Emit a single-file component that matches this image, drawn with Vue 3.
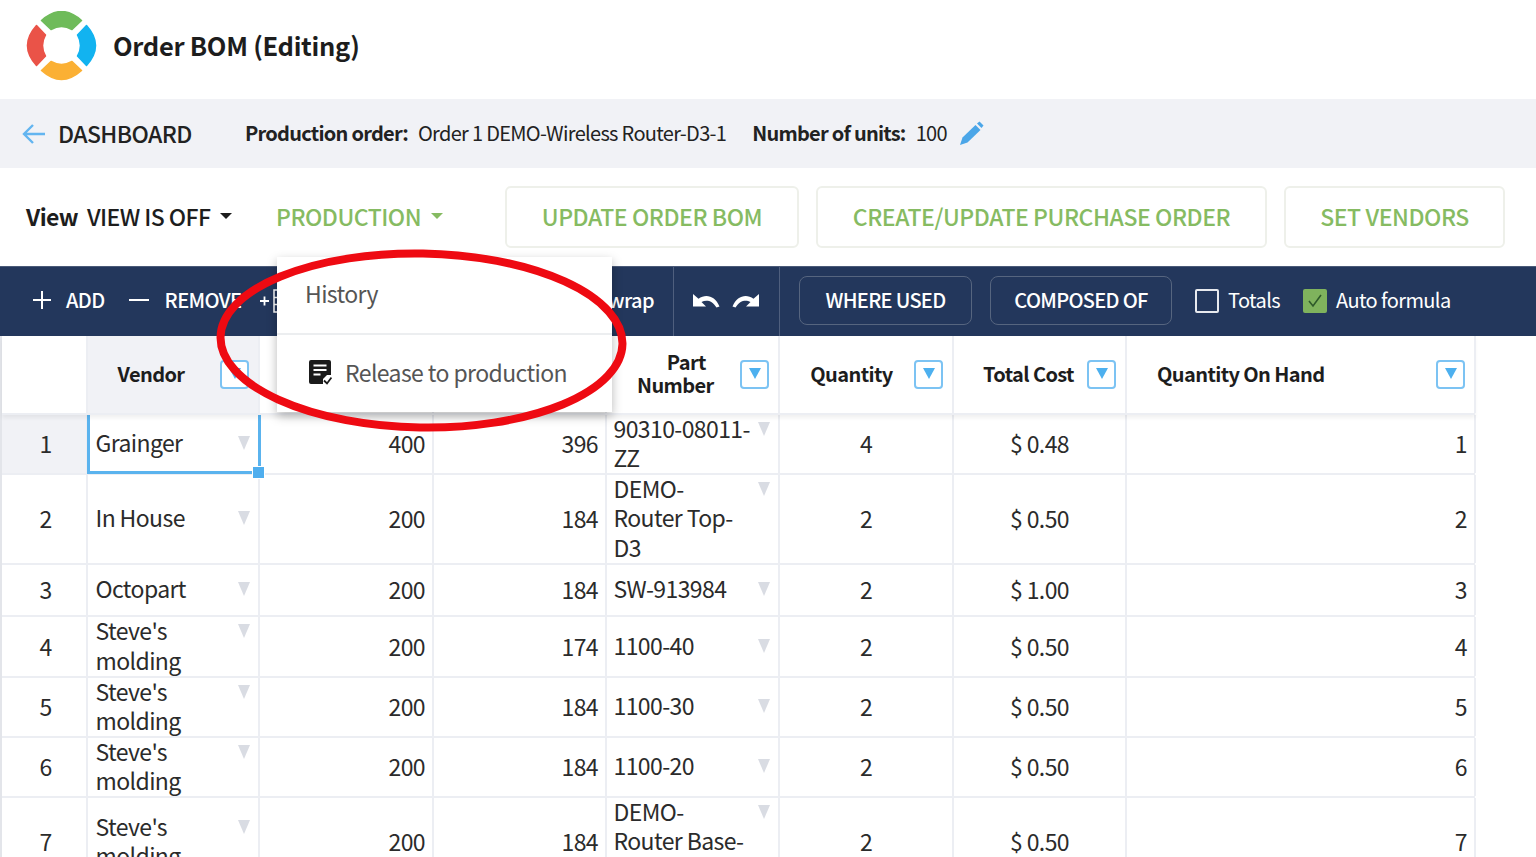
<script setup>
const cols = [
  { key: 'vendor', label: 'Vendor', shaded: true, filter: true },
  { key: 'a', label: '', filter: false },
  { key: 'b', label: '', filter: false },
  { key: 'part', label: 'Part\nNumber', filter: true },
  { key: 'qty', label: 'Quantity', filter: true },
  { key: 'cost', label: 'Total Cost', filter: true },
  { key: 'hand', label: 'Quantity On Hand', filter: true }
]
const rows = [
  { n: 1, h: 60, vendor: 'Grainger', a: 400, b: 396, part: '90310-08011-\nZZ', qty: 4, cost: '$ 0.48', hand: 1, active: true },
  { n: 2, h: 90, vendor: 'In House', a: 200, b: 184, part: 'DEMO-\nRouter Top-\nD3', qty: 2, cost: '$ 0.50', hand: 2 },
  { n: 3, h: 52, vendor: 'Octopart', a: 200, b: 184, part: 'SW-913984', qty: 2, cost: '$ 1.00', hand: 3 },
  { n: 4, h: 61, vendor: "Steve's\nmolding", a: 200, b: 174, part: '1100-40', qty: 2, cost: '$ 0.50', hand: 4 },
  { n: 5, h: 60, vendor: "Steve's\nmolding", a: 200, b: 184, part: '1100-30', qty: 2, cost: '$ 0.50', hand: 5 },
  { n: 6, h: 60, vendor: "Steve's\nmolding", a: 200, b: 184, part: '1100-20', qty: 2, cost: '$ 0.50', hand: 6 },
  { n: 7, h: 90, vendor: "Steve's\nmolding", a: 200, b: 184, part: 'DEMO-\nRouter Base-\nD3', qty: 2, cost: '$ 0.50', hand: 7 }
]
const logo = { 0: '#6fbb5a', 90: '#12b3f0', 180: '#fbb034', 270: '#ea5348' }
</script>

<template>
  <div class="page">
    <header class="head">
      <svg class="logo" viewBox="0 0 71 70" width="71" height="70">
        <g v-for="a in [0, 90, 180, 270]" :key="a" :transform="`rotate(${a} 35.5 34.5)`">
          <path d="M15.500 9.500Q35.500 -8.500 55.500 9.500L46 18.500Q35.500 12.500 25 18.500Z" :fill="logo[a]" :stroke="logo[a]" stroke-width="1.500" stroke-linejoin="round"/>
        </g>
      </svg>
      <h1 class="title">Order BOM (Editing)</h1>
    </header>

    <div class="subbar">
      <svg class="back" viewBox="0 0 24 22" width="24" height="22"><path d="M23 11H2M11 2 2 11l9 9" fill="none" stroke="#63b5f0" stroke-width="2.4"/></svg>
      <span class="dash">DASHBOARD</span>
      <b class="lab po">Production order:</b><span class="val">Order 1 DEMO-Wireless Router-D3-1</span>
      <b class="lab units">Number of units:</b><span class="val">100</span>
      <svg class="pencil" viewBox="0 0 25 25" width="25" height="25"><path d="M1 24l2.500-7.500L16.500 4l5 5L8.500 21.500z" fill="#4ba6e8"/><path d="M18 2.500l2.500-2 4 4-2 2.500z" fill="#4ba6e8"/></svg>
    </div>

    <div class="actions">
      <span class="view"><b>View</b><b class="viewoff">VIEW IS OFF</b><i class="caret dark"></i></span>
      <span class="prod">PRODUCTION<i class="caret green"></i></span>
      <button class="act a1">UPDATE ORDER BOM</button>
      <button class="act a2">CREATE/UPDATE PURCHASE ORDER</button>
      <button class="act a3">SET VENDORS</button>
    </div>

    <div class="toolbar">
      <div class="tleft">
        <span class="tool t-add"><svg viewBox="0 0 18 18" width="18" height="18"><path d="M9 0v18M0 9h18" stroke="#fff" stroke-width="2"/></svg>ADD</span>
        <span class="tool t-rem"><svg viewBox="0 0 20 18" width="20" height="18"><path d="M0 9h20" stroke="#fff" stroke-width="2"/></svg>REMOVE</span>
        <svg class="t-col" viewBox="0 0 30 24" width="30" height="24"><path d="M0 12h9M4.500 7.500v9" stroke="#fff" stroke-width="1.800"/><path d="M14 1h14v22H14zM14 8.500h14M14 15.500h14M21 1v22" fill="none" stroke="#fff" stroke-width="1.500"/></svg>
        <span class="t-wrap">Text wrap</span>
      </div>
      <span class="sep"></span>
      <svg class="undo" viewBox="0 0 28 14" width="28" height="14"><path d="M1 0v12.500h13l-4.500-4.500C14 5.500 20 6 24.500 13.500L27.500 12.500C23 2 14-.5 6.500 4.800z" fill="#fff"/></svg>
      <svg class="redo" viewBox="0 0 28 14" width="28" height="14"><path d="M27 0v12.500H14l4.500-4.500C14 5.500 8 6 3.500 13.500L.5 12.500C5 2 14-.5 21.500 4.800z" fill="#fff"/></svg>
      <span class="sep s2"></span>
      <button class="tbtn b1">WHERE USED</button>
      <button class="tbtn b2">COMPOSED OF</button>
      <span class="check"></span><span class="cl">Totals</span>
      <span class="check on"><svg viewBox="0 0 24 24" width="24" height="24"><path d="M6 12l4 5 8-11" fill="none" stroke="#2e5a2a" stroke-width="1.6"/></svg></span><span class="cl">Auto formula</span>
    </div>

    <div class="grid">
      <div class="row hrow">
        <div class="cell idx hd"></div>
        <div v-for="c in cols" :key="c.key" class="cell hd" :class="['c-' + c.key, { shaded: c.shaded }]">
          <span class="hl">{{ c.label }}</span>
          <span v-if="c.filter" class="fbtn"><i></i></span>
        </div>
      </div>
      <div v-for="r in rows" :key="r.n" class="row" :style="{ height: r.h + 'px' }">
        <div class="cell idx body" :class="{ idxon: r.active }">{{ r.n }}</div>
        <div class="cell c-vendor body txt" :class="{ active: r.active }">
          <div class="wrapbox"><span class="wraptxt">{{ r.vendor }}</span><i class="dd"></i></div>
          <i v-if="r.active" class="handle"></i>
        </div>
        <div class="cell c-a body num">{{ r.a }}</div>
        <div class="cell c-b body num">{{ r.b }}</div>
        <div class="cell c-part body txt">
          <div class="wrapbox"><span class="wraptxt">{{ r.part }}</span><i class="dd"></i></div>
        </div>
        <div class="cell c-qty body mid">{{ r.qty }}</div>
        <div class="cell c-cost body mid">{{ r.cost }}</div>
        <div class="cell c-hand body num">{{ r.hand }}</div>
      </div>
    </div>

    <div class="menu">
      <div class="mi m1">History</div>
      <div class="mi m2">
        <svg viewBox="0 0 24 26" width="24" height="26"><path d="M3 1h18a2 2 0 0 1 2 2v13h-4l-4 4v5H3a2 2 0 0 1-2-2V3a2 2 0 0 1 2-2z" fill="#1b1b1b"/><path d="M5.500 6.500h13M5.500 11h13M5.500 15.500h7" stroke="#fff" stroke-width="2.200"/><path d="M16 21.500l3 3 4.500-6" fill="none" stroke="#1b1b1b" stroke-width="1.800"/></svg>
        Release to production
      </div>
    </div>

    <svg class="ring" viewBox="0 0 1536 857" width="1536" height="857">
      <ellipse cx="421.500" cy="340.500" rx="201" ry="87" transform="rotate(1 421.500 340.500)" fill="none" stroke="#ee0a12" stroke-width="8"/>
    </svg>
  </div>
</template>

<style>
html, body { margin: 0; background: #fff; }
</style>

<style scoped>
.page { position: relative; width: 1536px; height: 857px; overflow: hidden; background: #fff; color: #222; font-family: "Noto Sans CJK SC", "Noto Sans", sans-serif; font-size: 23px; line-height: 30px; letter-spacing: -0.6px; }
.head { height: 99px; display: flex; align-items: center; padding-left: 26px; box-sizing: border-box; }
.logo { margin-top: -8px; }
.title { margin: -9px 0 0 16px; font-size: 25.500px; font-weight: 700; color: #1d1d1d; line-height: 34px; letter-spacing: -0.3px; }
.subbar { height: 69px; background: #f1f2f6; display: flex; align-items: center; padding-left: 22px; box-sizing: border-box; }
.subbar > b, .subbar > span { margin-top: -2px; }
.dash { margin-left: 12px; font-size: 23px; font-weight: 500; width: 187px; letter-spacing: -0.6px; }
.lab { font-size: 20px; font-weight: 700; letter-spacing: -0.75px; }
.val { font-size: 20px; margin-left: 10px; letter-spacing: -0.68px; }
.units { margin-left: 26px; }
.pencil { margin-left: 12px; margin-top: -1px; }
.actions { height: 98px; display: flex; align-items: center; padding-left: 26px; box-sizing: border-box; }
.view { display: flex; align-items: center; width: 250px; font-size: 23px; color: #1d1d1d; margin-top: -2px; }
.view b { font-weight: 700; }
.viewoff { margin-left: 9px; font-weight: 500 !important; }
.prod { display: flex; align-items: center; width: 229px; color: #86bb62; font-size: 23px; font-weight: 500; letter-spacing: -0.5px; margin-top: -2px; }
.caret { display: inline-block; margin-left: 10px; border: 6.5px solid transparent; border-bottom: 0; border-top-width: 6px; }
.caret.dark { border-top-color: #1d1d1d; }
.caret.green { border-top-color: #86bb62; }
.act { height: 62px; box-sizing: border-box; background: #fff; border: 2px solid #eef0ea; border-radius: 6px; color: #86bb62; font: 500 23px "Noto Sans CJK SC", sans-serif; letter-spacing: -0.45px; padding: 0 0 3px; }
.a1 { width: 294px; margin-right: 17px; }
.a2 { width: 451px; margin-right: 17px; }
.a3 { width: 221px; }
.toolbar { position: relative; height: 70px; background: #23375c; color: #fff; display: flex; align-items: center; font-size: 20px; font-weight: 500; border-top: 1px solid #4a5a78; box-sizing: border-box; }
.tleft { width: 673px; display: flex; align-items: center; }
.tool { display: flex; align-items: center; margin-top: -3px; }
.t-add { margin-left: 33px; gap: 15px; }
.t-rem { margin-left: 24px; gap: 16px; }
.t-col { margin-left: 19px; margin-top: -2px; }
.t-wrap { margin-left: auto; margin-right: 19px; white-space: nowrap; margin-top: -3px; }
.sep { width: 1px; align-self: stretch; background: #4f5f7e; }
.undo { margin-left: 18px; margin-top: -2px; }
.redo { margin-left: 12px; margin-top: -2px; }
.s2 { margin-left: 19px; }
.tbtn { height: 49px; box-sizing: border-box; border: 1.500px solid #56657f; border-radius: 8px; background: transparent; color: #fff; font: 500 20px "Noto Sans CJK SC", sans-serif; letter-spacing: -0.7px; padding: 0 0 3px; margin-top: -2px; }
.b1 { width: 173px; margin-left: 19px; }
.b2 { width: 182px; margin-left: 18px; }
.check { width: 24px; height: 24px; box-sizing: border-box; border: 2px solid #e7e9ee; border-radius: 2px; margin-left: 23px; display: block; margin-top: -2px; }
.check.on { background: #7fb35d; border: 0; }
.check.on svg { display: block; }
.cl { margin-left: 9px; font-weight: 400; margin-top: -3px; }
.row { display: flex; height: 60px; box-sizing: border-box; border-bottom: 2px solid #eceef3; }
.hrow { height: 79px; box-shadow: 0 3px 4px rgba(0,0,0,.06); position: relative; z-index: 1; }
.grid { width: 1475px; border-left: 2px solid #e3e5ea; box-sizing: border-box; }
.cell { box-sizing: border-box; border-right: 2px solid #eceef3; display: flex; align-items: center; position: relative; flex: none; font-size: 23px; color: #2b2b2b; }
.body { padding-bottom: 2px; }
.idx { width: 86px; justify-content: center; padding-left: 3px; }
.idxon { background: #f1f2f6; }
.c-vendor { width: 172px; }
.c-a { width: 174px; }
.c-b { width: 173px; }
.c-part { width: 173px; }
.c-qty { width: 174px; }
.c-cost { width: 173px; }
.c-hand { width: 349px; }
.hd { font-size: 20px; font-weight: 700; color: #1d1d1d; line-height: 23px; letter-spacing: -0.6px; padding-bottom: 2px; }
.shaded { background: #f1f2f6; }
.hl { display: block; flex: 1; text-align: center; white-space: pre-line; }
.c-vendor .hl { padding-right: 44px; }
.c-part .hl { padding: 0 66px 2px 30px; text-indent: 22px; }
.c-qty .hl { padding-right: 29px; }
.c-cost .hl { padding-right: 22px; }
.c-hand .hl { text-align: left; padding-left: 30px; }
.fbtn { position: absolute; right: 9px; top: 24px; width: 29px; height: 29px; box-sizing: border-box; border: 2px solid #7cc3f3; border-radius: 4px; background: #fff; display: flex; justify-content: center; padding-top: 6px; }
.fbtn i { border: 6px solid transparent; border-top: 11px solid #4db0ef; border-bottom: 0; height: 0; }
.txt { padding-left: 7.500px; padding-right: 8px; }
.c-part.txt { padding-left: 6.500px; }
.wrapbox { position: relative; width: 100%; }
.wraptxt { display: block; line-height: 29.500px; white-space: pre-line; }
.num { justify-content: flex-end; padding-right: 7px; }
.mid { justify-content: center; }
.dd { position: absolute; right: 0; top: 8px; width: 0; height: 0; border: 6px solid transparent; border-top: 14px solid #d9dce3; border-bottom: 0; }
.active::after { content: ""; position: absolute; left: -1px; right: -3px; top: 0; bottom: -1px; box-sizing: border-box; border: 3px solid #5ab3ee; border-top: 0; }
.handle { position: absolute; right: -7px; bottom: -6px; width: 11px; height: 11px; background: #4faeee; border: 1px solid #fff; z-index: 3; }
.menu { position: absolute; left: 277px; top: 257px; width: 335px; height: 155px; background: #fff; box-shadow: 0 4px 10px rgba(0,0,0,.28); z-index: 5; }
.mi { display: flex; align-items: center; color: #555; font-size: 23px; padding-left: 28px; box-sizing: border-box; letter-spacing: -0.6px; }
.m1 { height: 78px; border-bottom: 2px solid #eceef0; padding-bottom: 5px; }
.m2 { height: 77px; padding-left: 31px; padding-bottom: 3px; gap: 13px; }
.ring { position: absolute; left: 0; top: 0; z-index: 6; pointer-events: none; }
</style>
